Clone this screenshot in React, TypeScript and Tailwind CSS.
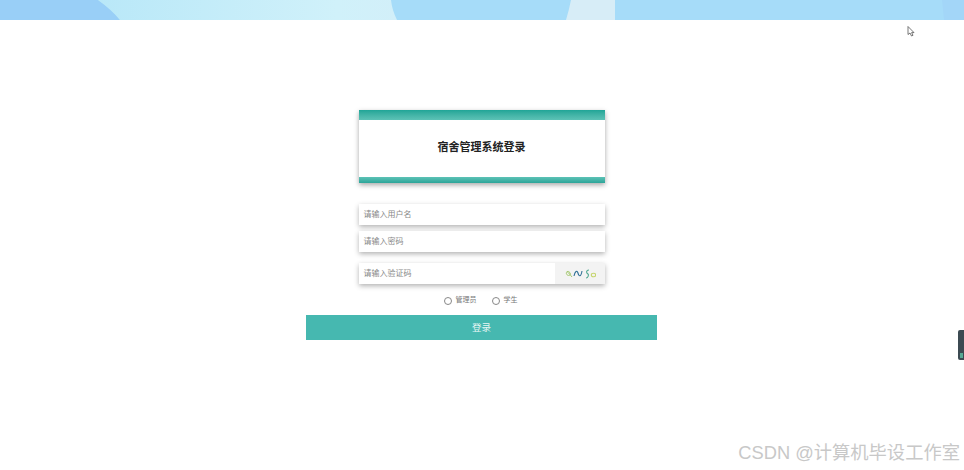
const cjk = '"Liberation Sans", "Noto Sans CJK SC", sans-serif';

function Banner() {
  return (
    <svg className="block w-full h-5" viewBox="0 0 964 20" preserveAspectRatio="none">
      <defs>
        <linearGradient id="glow" x1="0" x2="1" y1="0" y2="0">
          <stop offset="0" stopColor="#b9e8f8" />
          <stop offset="0.8" stopColor="#d0f1fa" />
          <stop offset="1" stopColor="#d2eff9" />
        </linearGradient>
      </defs>
      <rect width="964" height="20" fill="#a6dcf9" />
      <path d="M0 0H98Q112 10 120 20H0Z" fill="#99cff7" />
      <path d="M98 0H391Q392 10 397 20H120Q112 10 98 0Z" fill="url(#glow)" />
      <path d="M571 0H615V20H566Q569 10 571 0Z" fill="#d7edf7" />
      <path d="M942 0H964V20H944Z" fill="#a3d6f8" />
    </svg>
  );
}

function Field({ label }: { label: string }) {
  return (
    <div className="w-[246px] h-[21px] flex items-center pl-[5px] bg-white shadow-[0_2px_5px_rgba(0,0,0,0.3)] text-[8px] text-[#888]">
      {label}
    </div>
  );
}

function Captcha() {
  return (
    <svg width="32" height="12" viewBox="0 0 32 12">
      <path d="M3 3.5C6 3 7 6 6 7C4 8.500 1 6 3 3.500C5 5 7 8 8 9" fill="none" stroke="#a5c870" strokeWidth="1" />
      <path d="M10 8C11 3 13 2 14 5C15 9 17 9 18 3" fill="none" stroke="#2f6f96" strokeWidth="1.1" />
      <path d="M25 2C22 2 22 5 24 6C25 7 24 10 22 10" fill="none" stroke="#4aa58e" strokeWidth="1.1" />
      <ellipse cx="29.500" cy="7" rx="2.2" ry="1.8" fill="none" stroke="#c6d56e" strokeWidth="1.1" />
    </svg>
  );
}

function Radio({ label }: { label: string }) {
  return (
    <span className="flex items-center gap-[4px]">
      <span className="w-[8px] h-[8px] rounded-full border border-[#888] bg-white" />
      <span>{label}</span>
    </span>
  );
}

export default function App() {
  return (
    <div className="relative w-full h-[470px] overflow-hidden bg-white" style={{ fontFamily: cjk }}>
      <Banner />
      <main className="flex flex-col items-center pt-[90px] pr-[1px]">
        <section className="w-[246px] h-[73px] flex flex-col bg-white shadow-[0_2px_5px_rgba(0,0,0,0.35)]">
          <div className="h-[10px] bg-gradient-to-b from-[#1fa597] to-[#5cc2b6]" />
          <h1 className="flex-1 flex items-center justify-center pb-[2px] text-[11px] font-bold text-[#222]">
            宿舍管理系统登录
          </h1>
          <div className="h-[6px] bg-gradient-to-b from-[#5cc2b6] to-[#2aa599]" />
        </section>

        <div className="mt-[21px] flex flex-col gap-[6px]">
          <Field label="请输入用户名" />
          <Field label="请输入密码" />
        </div>

        <div className="mt-[11px] w-[246px] h-[21px] flex bg-white shadow-[0_2px_5px_rgba(0,0,0,0.3)] text-[8px] text-[#888]">
          <div className="flex-1 flex items-center pl-[5px]">请输入验证码</div>
          <div className="w-[50px] flex items-center justify-center bg-[#f3f3f3]">
            <Captcha />
          </div>
        </div>

        <div className="mt-[11px] h-[10px] flex items-center gap-[15px] pr-[2px] pt-[1px] text-[7px] text-[#777]">
          <Radio label="管理员" />
          <Radio label="学生" />
        </div>

        <button
          type="button"
          className="mt-[10px] w-[351px] h-[25px] flex items-center justify-center pt-[1px] bg-[#46b8b0] text-[#e6f6f4] text-[9.5px]"
        >
          登录
        </button>
      </main>

      <svg className="absolute left-[907px] top-[26px]" width="9" height="11" viewBox="0 0 9 11">
        <path d="M1 0.5V8.5L3 7L4.5 10L6 9.3L4.6 6.6H7Z" fill="#fff" stroke="#555" strokeWidth="0.8" />
      </svg>

      <div className="absolute right-0 top-[330px] w-[6px] h-[30px] rounded-l-[2px] bg-[#3c4a52] flex flex-col justify-end items-center pb-[2px]">
        <span className="w-[3px] h-[5px] bg-[#58a894]" />
      </div>

      <div className="absolute right-[4px] top-[441px] text-[18.3px] leading-[24px] text-[#c8c8c8] whitespace-nowrap">
        CSDN @计算机毕设工作室
      </div>
    </div>
  );
}
